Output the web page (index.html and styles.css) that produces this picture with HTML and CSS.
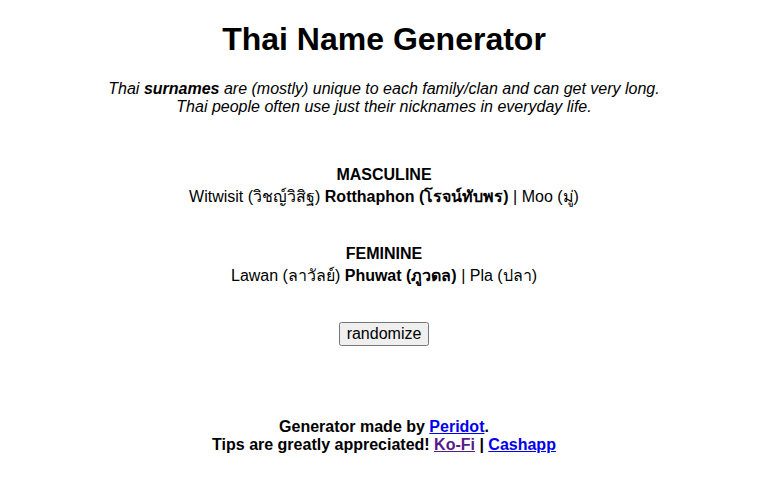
FILE: index.html
```html
<!DOCTYPE html>
<html lang="en">
<head>
<meta charset="utf-8">
<title>Thai Name Generator</title>
<link rel="stylesheet" href="styles.css">
</head>
<body>
<main class="page">
  <h1 class="title">Thai Name Generator</h1>
  <p class="intro"><i>Thai <b>surnames</b> are (mostly) unique to each family/clan and can get very long.<br>Thai people often use just their nicknames in everyday life.</i></p>

  <section class="gender gender-first">
    <div class="label">MASCULINE</div>
    <div class="names">Witwisit (วิชญ์วิสิฐ) <b>Rotthaphon (โรจน์ทับพร)</b> | Moo (มู่)</div>
  </section>

  <section class="gender">
    <div class="label">FEMININE</div>
    <div class="names">Lawan (ลาวัลย์) <b>Phuwat (ภูวดล)</b> | Pla (ปลา)</div>
  </section>

  <div class="actions">
    <button class="randomize" type="button">randomize</button>
  </div>

  <footer class="credits">
    Generator made by <a class="link" href="#">Peridot</a>.<br>
    Tips are greatly appreciated! <a class="link link-visited" href="#">Ko-Fi</a> | <a class="link" href="#">Cashapp</a>
  </footer>
</main>
</body>
</html>
```
FILE: styles.css
```css
html, body {
  margin: 0;
  background: #ffffff;
}

body {
  font-family: "Liberation Sans", Arial, sans-serif;
  font-size: 16px;
  color: #000000;
}

.page {
  text-align: center;
}

.title {
  font-size: 32px;
  font-weight: bold;
  margin: 21.44px 0;
}

.intro {
  margin: 0;
}

.gender {
  margin-top: 36px;
}

.gender-first {
  margin-top: 50.5px;
}

.label {
  font-weight: bold;
}

.actions {
  margin-top: 34px;
}

.randomize {
  font-family: "Liberation Sans", Arial, sans-serif;
  font-size: 16px;
  color: #000000;
}

.credits {
  margin-top: 72px;
  font-weight: bold;
}

.link {
  color: #0000ee;
  text-decoration: underline;
}

.link-visited {
  color: #551a8b;
}
```
